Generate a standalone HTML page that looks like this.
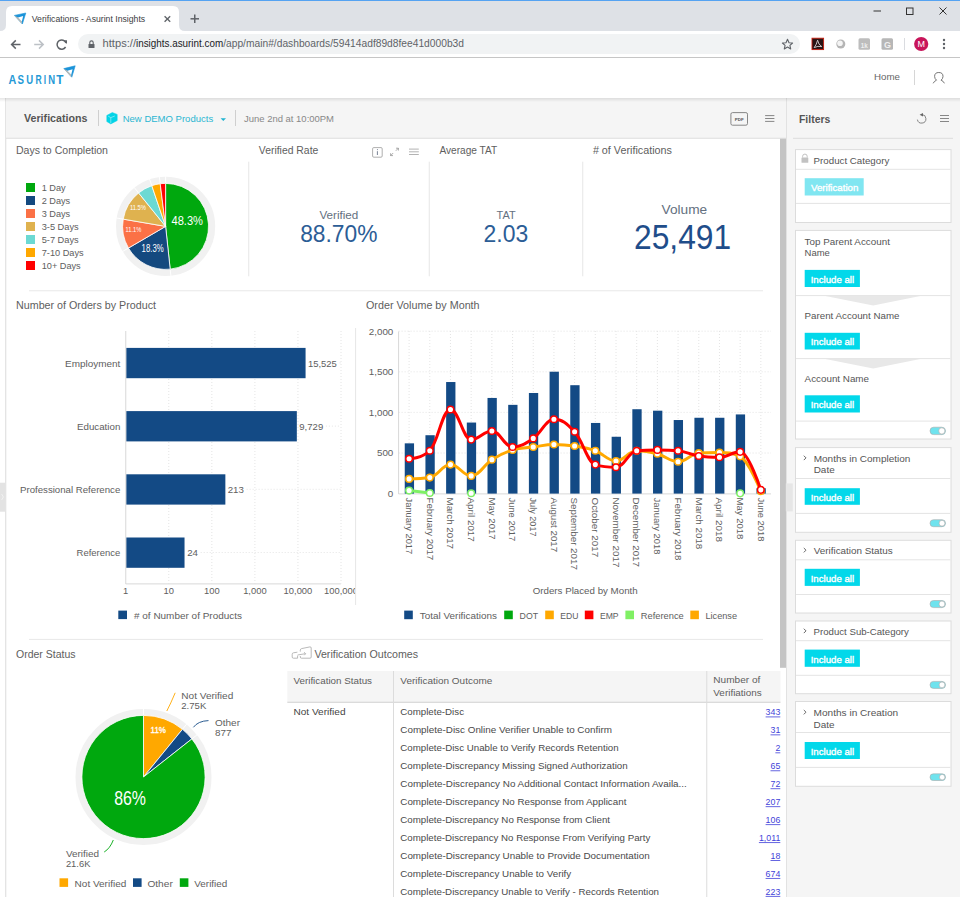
<!DOCTYPE html>
<html><head><meta charset="utf-8"><title>Verifications - Asurint Insights</title>
<style>html,body{margin:0;padding:0;background:#fff;overflow:hidden} svg{display:block} text{font-family:"Liberation Sans", sans-serif}</style>
</head><body><svg width="960" height="897" viewBox="0 0 960 897">
<rect x="0.00" y="0.00" width="960.00" height="31.00" fill="#dee1e6" />
<rect x="0.00" y="0.00" width="960.00" height="1.00" fill="#55a3f2" />
<path d="M0,31 Q6,31 6,25 L6,12 Q6,6 12,6 L173,6 Q179,6 179,12 L179,25 Q179,31 185,31 Z" fill="#fff" />
<path d="M14.4,15.4 L25.8,13 L22.4,24 Z" fill="#1b93d9" stroke="#1b93d9" stroke-width="0.6" stroke-linejoin="round"/>
<path d="M14.2,15.6 L18,17.6 L21.8,21.6 L22,23.8 Z" fill="#c7bcb0" />
<path d="M18,17.6 L23.2,16 L21.8,21.6 Z" fill="#fff" />
<text x="31.80" y="21.70" font-size="9.5" fill="#3c4043" textLength="113.40" lengthAdjust="spacingAndGlyphs">Verifications - Asurint Insights</text>
<line x1="164.60" y1="16.20" x2="170.20" y2="21.80" stroke="#5f6368" stroke-width="1.3" />
<line x1="170.20" y1="16.20" x2="164.60" y2="21.80" stroke="#5f6368" stroke-width="1.3" />
<line x1="190.50" y1="18.80" x2="199.00" y2="18.80" stroke="#5f6368" stroke-width="1.5" />
<line x1="194.75" y1="14.50" x2="194.75" y2="23.00" stroke="#5f6368" stroke-width="1.5" />
<line x1="873.50" y1="11.00" x2="881.00" y2="11.00" stroke="#333" stroke-width="1" />
<rect x="906.50" y="8.00" width="6.50" height="6.50" fill="none" stroke="#333" stroke-width="1"/>
<line x1="939.50" y1="7.50" x2="946.50" y2="14.50" stroke="#333" stroke-width="1" />
<line x1="946.50" y1="7.50" x2="939.50" y2="14.50" stroke="#333" stroke-width="1" />
<rect x="0.00" y="31.00" width="960.00" height="27.00" fill="#fff" />
<rect x="0.00" y="57.00" width="960.00" height="1.00" fill="#c6c6c6" />
<rect x="78.00" y="34.00" width="722.00" height="20.00" fill="#f1f3f4" rx="10"/>
<path d="M20.5,44.5 L11.8,44.5 M15.8,40.4 L11.6,44.5 L15.8,48.6" fill="none" stroke="#5f6368" stroke-width="1.5" />
<path d="M34.2,44.5 L43,44.5 M39,40.4 L43.2,44.5 L39,48.6" fill="none" stroke="#bdc1c6" stroke-width="1.5" />
<path d="M66,43 A4.6,4.6 0 1 0 65.6,47" fill="none" stroke="#5f6368" stroke-width="1.5" />
<path d="M63.2,40.2 L67,40.2 L67,44 Z" fill="#5f6368" />
<rect x="88.50" y="44.00" width="6.00" height="4.00" fill="#5f6368" rx="0.6"/>
<path d="M89.8,44 L89.8,42.6 A1.7,1.7 0 0 1 93.2,42.6 L93.2,44" fill="none" stroke="#5f6368" stroke-width="1.1" />
<text x="102.60" y="47.40" font-size="10.3" fill="#5f6368" textLength="33.40" lengthAdjust="spacingAndGlyphs">https://</text>
<text x="136.00" y="47.40" font-size="10.3" fill="#202124" textLength="87.10" lengthAdjust="spacingAndGlyphs">insights.asurint.com</text>
<text x="223.20" y="47.40" font-size="10.3" fill="#5f6368" textLength="240.80" lengthAdjust="spacingAndGlyphs">/app/main#/dashboards/59414adf89d8fee41d000b3d</text>
<path d="M787.5,39.3 L789,42.7 L792.6,43 L789.9,45.4 L790.7,48.9 L787.5,47.1 L784.3,48.9 L785.1,45.4 L782.4,43 L786,42.7 Z" fill="none" stroke="#5f6368" stroke-width="1.1" stroke-linejoin="round"/>
<rect x="812.00" y="38.20" width="11.60" height="11.40" fill="#2a1414" stroke="#c81e0f" stroke-width="0.9"/>
<path d="M814.2,47.6 Q816.6,44.6 817.6,40.2 Q818.4,44.8 821.8,46.6 Q817.8,45.6 814.2,47.6 Z" fill="none" stroke="#d9d2d2" stroke-width="0.9" />
<circle cx="840.8" cy="44" r="4.5" fill="#b5b5b5"/><circle cx="840" cy="43.3" r="2.8" fill="#f4f4f4"/>
<rect x="858.50" y="38.20" width="11.50" height="11.50" fill="#bdbdbd" rx="1.5"/>
<text x="860.80" y="47.80" font-size="8" fill="#f0f0f0" textLength="7.00" lengthAdjust="spacingAndGlyphs" font-weight="bold">1k</text>
<rect x="881.50" y="38.20" width="11.50" height="11.50" fill="#b7b7b7" rx="1.5"/>
<text x="884.00" y="47.80" font-size="9" fill="#f0f0f0" textLength="7.00" lengthAdjust="spacingAndGlyphs" font-weight="bold">G</text>
<line x1="904.50" y1="38.00" x2="904.50" y2="50.00" stroke="#dadce0" stroke-width="1" />
<circle cx="921.2" cy="44" r="7.1" fill="#c8155a"/>
<text x="921.20" y="47.40" font-size="9" fill="#fff" text-anchor="middle">M</text>
<circle cx="944" cy="40" r="1.2" fill="#5f6368"/>
<circle cx="944" cy="44" r="1.2" fill="#5f6368"/>
<circle cx="944" cy="48" r="1.2" fill="#5f6368"/>
<rect x="0.00" y="58.00" width="960.00" height="40.00" fill="#fff" />
<text x="8.50" y="83.90" font-size="12.2" fill="#2499d6" textLength="7.80" lengthAdjust="spacingAndGlyphs" font-weight="bold">A</text>
<text x="17.60" y="83.90" font-size="12.2" fill="#2499d6" textLength="6.50" lengthAdjust="spacingAndGlyphs" font-weight="bold">S</text>
<text x="26.30" y="83.90" font-size="12.2" fill="#2499d6" textLength="6.90" lengthAdjust="spacingAndGlyphs" font-weight="bold">U</text>
<text x="35.40" y="83.90" font-size="12.2" fill="#2499d6" textLength="6.20" lengthAdjust="spacingAndGlyphs" font-weight="bold">R</text>
<text x="43.70" y="83.90" font-size="12.2" fill="#2499d6" textLength="2.30" lengthAdjust="spacingAndGlyphs" font-weight="bold">I</text>
<text x="48.20" y="83.90" font-size="12.2" fill="#2499d6" textLength="6.85" lengthAdjust="spacingAndGlyphs" font-weight="bold">N</text>
<text x="56.30" y="83.90" font-size="12.2" fill="#2499d6" textLength="7.20" lengthAdjust="spacingAndGlyphs" font-weight="bold">T</text>
<path d="M63.8,68.6 L75.2,65.8 L71.8,77.2 Z" fill="#1b93d9" stroke="#1b93d9" stroke-width="0.6" stroke-linejoin="round"/>
<path d="M63.6,68.8 L67.4,70.8 L71.2,74.8 L71.4,77 Z" fill="#c7bcb0" />
<path d="M67.4,70.8 L72.6,69.2 L71.2,74.8 Z" fill="#fff" />
<text x="874.00" y="79.90" font-size="9.3" fill="#666" textLength="26.00" lengthAdjust="spacingAndGlyphs">Home</text>
<line x1="914.50" y1="70.00" x2="914.50" y2="85.00" stroke="#d6d6d6" stroke-width="1" />
<path d="M933.2,83.3 Q934,81.2 936.5,80.2 Q934.6,78.6 934.6,76.4 Q934.6,72.5 938.8,72.5 Q943,72.5 943,76.4 Q943,78.6 941.1,80.2 Q943.6,81.2 944.4,83.3" fill="none" stroke="#666" stroke-width="0.9" />
<rect x="0.00" y="98.00" width="960.00" height="799.00" fill="#f5f5f5" />
<defs><linearGradient id="sh" x1="0" y1="0" x2="0" y2="1"><stop offset="0" stop-color="#000" stop-opacity="0.10"/><stop offset="1" stop-color="#000" stop-opacity="0"/></linearGradient></defs>
<rect x="6.00" y="138.50" width="774.00" height="759.00" fill="#fff" />
<rect x="0.00" y="98.00" width="5.50" height="799.00" fill="#ffffff" />
<line x1="5.75" y1="98.00" x2="5.75" y2="897.00" stroke="#dcdcdc" stroke-width="1" />
<rect x="0.00" y="482.70" width="5.30" height="29.00" fill="#e3e3e3" />
<path d="M1.6,494 L3.4,497 L1.6,500" fill="none" stroke="#f5f5f5" stroke-width="0.8" />
<rect x="6.00" y="98.00" width="780.00" height="40.00" fill="#f5f5f5" />
<line x1="6.00" y1="138.25" x2="786.00" y2="138.25" stroke="#dedede" stroke-width="1" />
<text x="24.00" y="122.20" font-size="11.4" fill="#555" textLength="63.50" lengthAdjust="spacingAndGlyphs" font-weight="bold">Verifications</text>
<line x1="98.50" y1="110.00" x2="98.50" y2="126.00" stroke="#cfcfcf" stroke-width="1" />
<path d="M106.8,115.4 L112.3,112.5 L117.2,114.4 L117.2,120.6 L110.8,123.9 L106.8,121.6 Z" fill="#03d3e6" stroke="#03d3e6" stroke-width="0.5" stroke-linejoin="round"/>
<path d="M108.2,116.2 L110.8,117.6 L114.8,116 M110.8,117.6 L110.8,123.2" fill="none" stroke="#bff4fa" stroke-width="0.6" />
<text x="122.70" y="122.00" font-size="9.9" fill="#2ab6d2" textLength="90.50" lengthAdjust="spacingAndGlyphs">New DEMO Products</text>
<path d="M220.6,118.2 L226,118.2 L223.3,121 Z" fill="#1fb3d1" />
<line x1="235.50" y1="110.00" x2="235.50" y2="126.00" stroke="#cfcfcf" stroke-width="1" />
<text x="244.00" y="122.00" font-size="9.7" fill="#888" textLength="90.00" lengthAdjust="spacingAndGlyphs">June 2nd at 10:00PM</text>
<rect x="730.90" y="112.60" width="16.60" height="12.60" fill="none" stroke="#7a7a7a" stroke-width="0.9" rx="1.6"/>
<text x="734.80" y="120.80" font-size="4.3" fill="#555" textLength="9.00" lengthAdjust="spacingAndGlyphs" font-weight="bold">PDF</text>
<line x1="765.10" y1="115.60" x2="774.40" y2="115.60" stroke="#7a7a7a" stroke-width="0.9" />
<line x1="765.10" y1="118.50" x2="774.40" y2="118.50" stroke="#7a7a7a" stroke-width="0.9" />
<line x1="765.10" y1="121.40" x2="774.40" y2="121.40" stroke="#7a7a7a" stroke-width="0.9" />
<rect x="780.00" y="138.50" width="6.50" height="759.00" fill="#ffffff" />
<rect x="780.00" y="138.50" width="6.50" height="529.30" fill="#c4c4c4" />
<line x1="786.50" y1="98.00" x2="786.50" y2="897.00" stroke="#e2e2e2" stroke-width="1" />
<rect x="785.80" y="483.40" width="7.00" height="28.00" fill="#e6e6e6" />
<text x="799.00" y="122.50" font-size="11.4" fill="#555" textLength="31.30" lengthAdjust="spacingAndGlyphs" font-weight="bold">Filters</text>
<path d="M921.8,114.5 A4.3,4.3 0 1 1 917.4,119.6" fill="none" stroke="#777" stroke-width="0.9" />
<path d="M923,112.9 L919.6,114.7 L923,116.5 Z" fill="#666" />
<line x1="940.00" y1="115.50" x2="949.00" y2="115.50" stroke="#7a7a7a" stroke-width="0.9" />
<line x1="940.00" y1="118.50" x2="949.00" y2="118.50" stroke="#7a7a7a" stroke-width="0.9" />
<line x1="940.00" y1="121.50" x2="949.00" y2="121.50" stroke="#7a7a7a" stroke-width="0.9" />
<line x1="793.00" y1="138.30" x2="953.00" y2="138.30" stroke="#dcdcdc" stroke-width="1" />
<rect x="0.00" y="98.00" width="960.00" height="4.00" fill="url(#sh)" />
<text x="16.00" y="154.20" font-size="11" fill="#5e5e5e" textLength="92.00" lengthAdjust="spacingAndGlyphs">Days to Completion</text>
<rect x="26.00" y="183.00" width="9.00" height="9.00" fill="#00a80e" />
<text x="41.70" y="191.20" font-size="9.4" fill="#5e5e5e" textLength="24.00" lengthAdjust="spacingAndGlyphs">1 Day</text>
<rect x="26.00" y="196.00" width="9.00" height="9.00" fill="#14497f" />
<text x="41.70" y="204.20" font-size="9.4" fill="#5e5e5e" textLength="28.50" lengthAdjust="spacingAndGlyphs">2 Days</text>
<rect x="26.00" y="209.00" width="9.00" height="9.00" fill="#fb7146" />
<text x="41.70" y="217.20" font-size="9.4" fill="#5e5e5e" textLength="28.50" lengthAdjust="spacingAndGlyphs">3 Days</text>
<rect x="26.00" y="222.00" width="9.00" height="9.00" fill="#dfb24f" />
<text x="41.70" y="230.20" font-size="9.4" fill="#5e5e5e" textLength="37.00" lengthAdjust="spacingAndGlyphs">3-5 Days</text>
<rect x="26.00" y="235.00" width="9.00" height="9.00" fill="#6cd9d3" />
<text x="41.70" y="243.20" font-size="9.4" fill="#5e5e5e" textLength="37.00" lengthAdjust="spacingAndGlyphs">5-7 Days</text>
<rect x="26.00" y="248.00" width="9.00" height="9.00" fill="#ffa800" />
<text x="41.70" y="256.20" font-size="9.4" fill="#5e5e5e" textLength="42.00" lengthAdjust="spacingAndGlyphs">7-10 Days</text>
<rect x="26.00" y="261.00" width="9.00" height="9.00" fill="#ff0000" />
<text x="41.70" y="269.20" font-size="9.4" fill="#5e5e5e" textLength="39.00" lengthAdjust="spacingAndGlyphs">10+ Days</text>
<circle cx="165.6" cy="226.4" r="46.10" fill="none" stroke="#f1f1f1" stroke-width="7.00"/>
<line x1="165.60" y1="183.80" x2="165.60" y2="176.30" stroke="#fff" stroke-width="1.0" />
<line x1="170.14" y1="268.76" x2="170.94" y2="276.21" stroke="#fff" stroke-width="1.0" />
<line x1="128.80" y1="247.85" x2="122.32" y2="251.63" stroke="#fff" stroke-width="1.0" />
<line x1="123.61" y1="219.21" x2="116.22" y2="217.94" stroke="#fff" stroke-width="1.0" />
<line x1="138.86" y1="193.24" x2="134.15" y2="187.40" stroke="#fff" stroke-width="1.0" />
<line x1="151.93" y1="186.05" x2="149.52" y2="178.95" stroke="#fff" stroke-width="1.0" />
<line x1="160.26" y1="184.14" x2="159.32" y2="176.70" stroke="#fff" stroke-width="1.0" />
<path d="M165.60,226.40 L165.60,183.40 A43,43 0 0 1 170.18,269.15 Z" fill="#00a80e" stroke="#fff" stroke-width="0.8" stroke-linejoin="round"/>
<path d="M165.60,226.40 L170.18,269.15 A43,43 0 0 1 128.45,248.06 Z" fill="#14497f" stroke="#fff" stroke-width="0.8" stroke-linejoin="round"/>
<path d="M165.60,226.40 L128.45,248.06 A43,43 0 0 1 123.22,219.14 Z" fill="#fb7146" stroke="#fff" stroke-width="0.8" stroke-linejoin="round"/>
<path d="M165.60,226.40 L123.22,219.14 A43,43 0 0 1 138.61,192.93 Z" fill="#dfb24f" stroke="#fff" stroke-width="0.8" stroke-linejoin="round"/>
<path d="M165.60,226.40 L138.61,192.93 A43,43 0 0 1 151.80,185.67 Z" fill="#6cd9d3" stroke="#fff" stroke-width="0.8" stroke-linejoin="round"/>
<path d="M165.60,226.40 L151.80,185.67 A43,43 0 0 1 160.21,183.74 Z" fill="#ffa800" stroke="#fff" stroke-width="0.8" stroke-linejoin="round"/>
<path d="M165.60,226.40 L160.21,183.74 A43,43 0 0 1 165.60,183.40 Z" fill="#ff0000" stroke="#fff" stroke-width="0.8" stroke-linejoin="round"/>
<text x="171.50" y="224.60" font-size="13.5" fill="#fff" textLength="31.50" lengthAdjust="spacingAndGlyphs">48.3%</text>
<text x="141.60" y="251.90" font-size="10" fill="#fff" textLength="22.00" lengthAdjust="spacingAndGlyphs">18.3%</text>
<text x="125.50" y="232.20" font-size="7.4" fill="#fff" textLength="15.80" lengthAdjust="spacingAndGlyphs">11.1%</text>
<text x="129.90" y="209.60" font-size="7.4" fill="#fff" textLength="16.00" lengthAdjust="spacingAndGlyphs">11.5%</text>
<text x="258.80" y="154.20" font-size="11" fill="#5e5e5e" textLength="59.50" lengthAdjust="spacingAndGlyphs">Verified Rate</text>
<rect x="372.60" y="147.60" width="9.60" height="9.60" fill="none" stroke="#9a9a9a" stroke-width="0.8" rx="1.2"/>
<line x1="377.40" y1="151.20" x2="377.40" y2="155.00" stroke="#6a7488" stroke-width="0.9" />
<rect x="376.95" y="149.20" width="0.90" height="0.90" fill="#6a7488" />
<path d="M390.6,155.6 L393.2,153 M390.6,153.2 L390.6,155.6 L393,155.6 M398.4,148.2 L395.8,150.8 M396,148.2 L398.4,148.2 L398.4,150.6" fill="none" stroke="#8a8a8a" stroke-width="0.7" />
<line x1="409.00" y1="149.10" x2="418.80" y2="149.10" stroke="#a0a0a0" stroke-width="0.8" />
<line x1="409.00" y1="151.80" x2="418.80" y2="151.80" stroke="#a0a0a0" stroke-width="0.8" />
<line x1="409.00" y1="154.50" x2="418.80" y2="154.50" stroke="#a0a0a0" stroke-width="0.8" />
<line x1="248.75" y1="161.70" x2="248.75" y2="276.30" stroke="#e6e6e6" stroke-width="1" />
<line x1="429.25" y1="161.70" x2="429.25" y2="276.30" stroke="#e6e6e6" stroke-width="1" />
<line x1="582.75" y1="161.70" x2="582.75" y2="276.30" stroke="#e6e6e6" stroke-width="1" />
<text x="319.50" y="219.40" font-size="10.8" fill="#647080" textLength="38.80" lengthAdjust="spacingAndGlyphs">Verified</text>
<text x="300.20" y="241.70" font-size="23.6" fill="#2c5d96" textLength="77.20" lengthAdjust="spacingAndGlyphs">88.70%</text>
<text x="439.40" y="154.20" font-size="11" fill="#5e5e5e" textLength="57.80" lengthAdjust="spacingAndGlyphs">Average TAT</text>
<text x="496.60" y="219.40" font-size="10.8" fill="#647080" textLength="19.00" lengthAdjust="spacingAndGlyphs">TAT</text>
<text x="483.60" y="241.70" font-size="23.6" fill="#2c5d96" textLength="44.60" lengthAdjust="spacingAndGlyphs">2.03</text>
<text x="592.90" y="154.20" font-size="11" fill="#5e5e5e" textLength="79.00" lengthAdjust="spacingAndGlyphs"># of Verifications</text>
<text x="661.60" y="214.20" font-size="13.5" fill="#647080" textLength="45.60" lengthAdjust="spacingAndGlyphs">Volume</text>
<text x="634.00" y="249.20" font-size="34.5" fill="#1f4d8a" textLength="97.20" lengthAdjust="spacingAndGlyphs">25,491</text>
<line x1="29.00" y1="290.75" x2="763.00" y2="290.75" stroke="#e8e8e8" stroke-width="1" />
<text x="16.00" y="309.10" font-size="11" fill="#5e5e5e" textLength="140.00" lengthAdjust="spacingAndGlyphs">Number of Orders by Product</text>
<line x1="168.76" y1="331.00" x2="168.76" y2="583.50" stroke="#dddddd" stroke-width="0.8" stroke-dasharray="1,2"/>
<line x1="211.82" y1="331.00" x2="211.82" y2="583.50" stroke="#dddddd" stroke-width="0.8" stroke-dasharray="1,2"/>
<line x1="254.88" y1="331.00" x2="254.88" y2="583.50" stroke="#dddddd" stroke-width="0.8" stroke-dasharray="1,2"/>
<line x1="297.94" y1="331.00" x2="297.94" y2="583.50" stroke="#dddddd" stroke-width="0.8" stroke-dasharray="1,2"/>
<line x1="341.00" y1="331.00" x2="341.00" y2="583.50" stroke="#dddddd" stroke-width="0.8" stroke-dasharray="1,2"/>
<line x1="339.60" y1="362.90" x2="340.80" y2="362.90" stroke="#dddddd" stroke-width="0.8" stroke-dasharray="1,2"/>
<rect x="126.20" y="347.90" width="179.37" height="30.30" fill="#134a85" />
<text x="307.90" y="366.60" font-size="9.4" fill="#5e5e5e" textLength="29.00" lengthAdjust="spacingAndGlyphs">15,525</text>
<text x="65.00" y="366.80" font-size="9.4" fill="#5e5e5e" textLength="55.30" lengthAdjust="spacingAndGlyphs">Employment</text>
<line x1="325.90" y1="426.10" x2="340.80" y2="426.10" stroke="#dddddd" stroke-width="0.8" stroke-dasharray="1,2"/>
<rect x="126.20" y="411.10" width="170.63" height="30.30" fill="#134a85" />
<text x="299.30" y="429.80" font-size="9.4" fill="#5e5e5e" textLength="23.90" lengthAdjust="spacingAndGlyphs">9,729</text>
<text x="77.00" y="430.00" font-size="9.4" fill="#5e5e5e" textLength="43.30" lengthAdjust="spacingAndGlyphs">Education</text>
<line x1="246.60" y1="489.30" x2="340.80" y2="489.30" stroke="#dddddd" stroke-width="0.8" stroke-dasharray="1,2"/>
<rect x="126.20" y="474.30" width="99.16" height="30.30" fill="#134a85" />
<text x="227.70" y="493.00" font-size="9.4" fill="#5e5e5e" textLength="16.20" lengthAdjust="spacingAndGlyphs">213</text>
<text x="20.00" y="493.20" font-size="9.4" fill="#5e5e5e" textLength="100.30" lengthAdjust="spacingAndGlyphs">Professional Reference</text>
<line x1="200.70" y1="552.50" x2="340.80" y2="552.50" stroke="#dddddd" stroke-width="0.8" stroke-dasharray="1,2"/>
<rect x="126.20" y="537.50" width="58.33" height="30.30" fill="#134a85" />
<text x="187.20" y="556.20" font-size="9.4" fill="#5e5e5e" textLength="10.80" lengthAdjust="spacingAndGlyphs">24</text>
<text x="76.60" y="556.40" font-size="9.4" fill="#5e5e5e" textLength="43.70" lengthAdjust="spacingAndGlyphs">Reference</text>
<line x1="125.75" y1="331.00" x2="125.75" y2="584.00" stroke="#d8d8d8" stroke-width="1" />
<line x1="125.70" y1="583.90" x2="340.80" y2="583.90" stroke="#d8d8d8" stroke-width="1" />
<text x="125.70" y="594.20" font-size="9.4" fill="#5e5e5e" text-anchor="middle">1</text>
<text x="168.76" y="594.20" font-size="9.4" fill="#5e5e5e" text-anchor="middle">10</text>
<text x="211.82" y="594.20" font-size="9.4" fill="#5e5e5e" text-anchor="middle">100</text>
<text x="254.88" y="594.20" font-size="9.4" fill="#5e5e5e" text-anchor="middle">1,000</text>
<text x="297.94" y="594.20" font-size="9.4" fill="#5e5e5e" text-anchor="middle">10,000</text>
<clipPath id="bc"><rect x="300" y="580" width="55.4" height="20"/></clipPath>
<text x="341.00" y="594.20" font-size="9.4" fill="#5e5e5e" text-anchor="middle" clip-path="url(#bc)">100,000</text>
<line x1="355.60" y1="328.00" x2="355.60" y2="605.00" stroke="#e6e6e6" stroke-width="1" />
<rect x="118.30" y="610.60" width="8.70" height="8.50" fill="#134a85" />
<text x="134.00" y="618.50" font-size="9.4" fill="#5e5e5e" textLength="108.00" lengthAdjust="spacingAndGlyphs"># of Number of Products</text>
<text x="366.00" y="309.10" font-size="11" fill="#5e5e5e" textLength="113.60" lengthAdjust="spacingAndGlyphs">Order Volume by Month</text>
<text x="393.30" y="497.00" font-size="9.8" fill="#5e5e5e" text-anchor="end">0</text>
<line x1="398.60" y1="453.00" x2="771.00" y2="453.00" stroke="#dddddd" stroke-width="0.8" stroke-dasharray="1,2"/>
<text x="393.30" y="456.40" font-size="9.8" fill="#5e5e5e" text-anchor="end">500</text>
<line x1="398.60" y1="412.40" x2="771.00" y2="412.40" stroke="#dddddd" stroke-width="0.8" stroke-dasharray="1,2"/>
<text x="393.30" y="415.80" font-size="9.8" fill="#5e5e5e" text-anchor="end">1,000</text>
<line x1="398.60" y1="371.80" x2="771.00" y2="371.80" stroke="#dddddd" stroke-width="0.8" stroke-dasharray="1,2"/>
<text x="393.30" y="375.20" font-size="9.8" fill="#5e5e5e" text-anchor="end">1,500</text>
<line x1="398.60" y1="331.20" x2="771.00" y2="331.20" stroke="#dddddd" stroke-width="0.8" stroke-dasharray="1,2"/>
<text x="393.30" y="334.60" font-size="9.8" fill="#5e5e5e" text-anchor="end">2,000</text>
<line x1="409.10" y1="331.00" x2="409.10" y2="493.60" stroke="#dddddd" stroke-width="0.8" stroke-dasharray="1,2"/>
<line x1="429.79" y1="331.00" x2="429.79" y2="493.60" stroke="#dddddd" stroke-width="0.8" stroke-dasharray="1,2"/>
<line x1="450.48" y1="331.00" x2="450.48" y2="493.60" stroke="#dddddd" stroke-width="0.8" stroke-dasharray="1,2"/>
<line x1="471.17" y1="331.00" x2="471.17" y2="493.60" stroke="#dddddd" stroke-width="0.8" stroke-dasharray="1,2"/>
<line x1="491.86" y1="331.00" x2="491.86" y2="493.60" stroke="#dddddd" stroke-width="0.8" stroke-dasharray="1,2"/>
<line x1="512.55" y1="331.00" x2="512.55" y2="493.60" stroke="#dddddd" stroke-width="0.8" stroke-dasharray="1,2"/>
<line x1="533.24" y1="331.00" x2="533.24" y2="493.60" stroke="#dddddd" stroke-width="0.8" stroke-dasharray="1,2"/>
<line x1="553.93" y1="331.00" x2="553.93" y2="493.60" stroke="#dddddd" stroke-width="0.8" stroke-dasharray="1,2"/>
<line x1="574.62" y1="331.00" x2="574.62" y2="493.60" stroke="#dddddd" stroke-width="0.8" stroke-dasharray="1,2"/>
<line x1="595.31" y1="331.00" x2="595.31" y2="493.60" stroke="#dddddd" stroke-width="0.8" stroke-dasharray="1,2"/>
<line x1="616.00" y1="331.00" x2="616.00" y2="493.60" stroke="#dddddd" stroke-width="0.8" stroke-dasharray="1,2"/>
<line x1="636.69" y1="331.00" x2="636.69" y2="493.60" stroke="#dddddd" stroke-width="0.8" stroke-dasharray="1,2"/>
<line x1="657.38" y1="331.00" x2="657.38" y2="493.60" stroke="#dddddd" stroke-width="0.8" stroke-dasharray="1,2"/>
<line x1="678.07" y1="331.00" x2="678.07" y2="493.60" stroke="#dddddd" stroke-width="0.8" stroke-dasharray="1,2"/>
<line x1="698.76" y1="331.00" x2="698.76" y2="493.60" stroke="#dddddd" stroke-width="0.8" stroke-dasharray="1,2"/>
<line x1="719.45" y1="331.00" x2="719.45" y2="493.60" stroke="#dddddd" stroke-width="0.8" stroke-dasharray="1,2"/>
<line x1="740.14" y1="331.00" x2="740.14" y2="493.60" stroke="#dddddd" stroke-width="0.8" stroke-dasharray="1,2"/>
<line x1="760.83" y1="331.00" x2="760.83" y2="493.60" stroke="#dddddd" stroke-width="0.8" stroke-dasharray="1,2"/>
<line x1="398.60" y1="331.50" x2="398.60" y2="494.00" stroke="#d8d8d8" stroke-width="1" />
<line x1="398.60" y1="493.90" x2="771.00" y2="493.90" stroke="#d8d8d8" stroke-width="1" />
<rect x="404.75" y="443.34" width="9.30" height="50.26" fill="#134a85" />
<rect x="425.44" y="435.22" width="9.30" height="58.38" fill="#134a85" />
<rect x="446.13" y="382.03" width="9.30" height="111.57" fill="#134a85" />
<rect x="466.82" y="422.55" width="9.30" height="71.05" fill="#134a85" />
<rect x="487.51" y="397.95" width="9.30" height="95.65" fill="#134a85" />
<rect x="508.20" y="404.85" width="9.30" height="88.75" fill="#134a85" />
<rect x="528.89" y="392.99" width="9.30" height="100.61" fill="#134a85" />
<rect x="549.58" y="371.72" width="9.30" height="121.88" fill="#134a85" />
<rect x="570.27" y="385.20" width="9.30" height="108.40" fill="#134a85" />
<rect x="590.96" y="422.96" width="9.30" height="70.64" fill="#134a85" />
<rect x="611.65" y="436.76" width="9.30" height="56.84" fill="#134a85" />
<rect x="632.34" y="409.23" width="9.30" height="84.37" fill="#134a85" />
<rect x="653.03" y="410.69" width="9.30" height="82.91" fill="#134a85" />
<rect x="673.72" y="420.03" width="9.30" height="73.57" fill="#134a85" />
<rect x="694.41" y="417.76" width="9.30" height="75.84" fill="#134a85" />
<rect x="715.10" y="417.76" width="9.30" height="75.84" fill="#134a85" />
<rect x="735.79" y="414.43" width="9.30" height="79.17" fill="#134a85" />
<rect x="756.48" y="488.24" width="9.30" height="5.36" fill="#134a85" />
<path d="M409.10,478.90 C409.10,478.90 421.51,478.90 429.79,477.60 C438.07,476.30 442.20,464.61 450.48,464.61 C458.76,464.61 462.89,475.90 471.17,475.90 C479.45,475.90 483.58,464.86 491.86,459.66 C500.14,454.46 504.27,452.45 512.55,449.91 C520.83,447.38 524.96,448.08 533.24,446.99 C541.52,445.90 545.65,444.47 553.93,444.47 C562.21,444.47 566.34,444.77 574.62,446.02 C582.90,447.27 587.03,447.72 595.31,450.73 C603.59,453.73 607.72,461.04 616.00,461.04 C624.28,461.04 628.41,450.73 636.69,450.73 C644.97,450.73 649.10,451.62 657.38,453.81 C665.66,456.00 669.79,461.69 678.07,461.69 C686.35,461.69 690.48,453.73 698.76,453.08 C707.04,452.43 711.17,452.43 719.45,452.43 C727.73,452.43 731.86,452.43 740.14,456.33 C748.42,460.23 760.83,491.16 760.83,491.16" fill="none" stroke="#ffa800" stroke-width="3" stroke-linejoin="round" stroke-linecap="round"/>
<circle cx="409.10" cy="478.90" r="3.3" fill="#fff" stroke="#ffa800" stroke-width="1.5"/>
<circle cx="429.79" cy="477.60" r="3.3" fill="#fff" stroke="#ffa800" stroke-width="1.5"/>
<circle cx="450.48" cy="464.61" r="3.3" fill="#fff" stroke="#ffa800" stroke-width="1.5"/>
<circle cx="471.17" cy="475.90" r="3.3" fill="#fff" stroke="#ffa800" stroke-width="1.5"/>
<circle cx="491.86" cy="459.66" r="3.3" fill="#fff" stroke="#ffa800" stroke-width="1.5"/>
<circle cx="512.55" cy="449.91" r="3.3" fill="#fff" stroke="#ffa800" stroke-width="1.5"/>
<circle cx="533.24" cy="446.99" r="3.3" fill="#fff" stroke="#ffa800" stroke-width="1.5"/>
<circle cx="553.93" cy="444.47" r="3.3" fill="#fff" stroke="#ffa800" stroke-width="1.5"/>
<circle cx="574.62" cy="446.02" r="3.3" fill="#fff" stroke="#ffa800" stroke-width="1.5"/>
<circle cx="595.31" cy="450.73" r="3.3" fill="#fff" stroke="#ffa800" stroke-width="1.5"/>
<circle cx="616.00" cy="461.04" r="3.3" fill="#fff" stroke="#ffa800" stroke-width="1.5"/>
<circle cx="636.69" cy="450.73" r="3.3" fill="#fff" stroke="#ffa800" stroke-width="1.5"/>
<circle cx="657.38" cy="453.81" r="3.3" fill="#fff" stroke="#ffa800" stroke-width="1.5"/>
<circle cx="678.07" cy="461.69" r="3.3" fill="#fff" stroke="#ffa800" stroke-width="1.5"/>
<circle cx="698.76" cy="453.08" r="3.3" fill="#fff" stroke="#ffa800" stroke-width="1.5"/>
<circle cx="719.45" cy="452.43" r="3.3" fill="#fff" stroke="#ffa800" stroke-width="1.5"/>
<circle cx="740.14" cy="456.33" r="3.3" fill="#fff" stroke="#ffa800" stroke-width="1.5"/>
<circle cx="760.83" cy="491.16" r="3.3" fill="#fff" stroke="#ffa800" stroke-width="1.5"/>
<path d="M409.10,458.77 C409.10,458.77 421.51,458.77 429.79,450.73 C438.07,442.69 442.20,409.48 450.48,409.48 C458.76,409.48 462.89,439.60 471.17,439.60 C479.45,439.60 483.58,430.99 491.86,430.99 C500.14,430.99 504.27,446.99 512.55,446.99 C520.83,446.99 524.96,443.92 533.24,438.38 C541.52,432.85 545.65,419.30 553.93,419.30 C562.21,419.30 566.34,422.74 574.62,431.81 C582.90,440.87 587.03,461.93 595.31,464.61 C603.59,467.29 607.72,467.29 616.00,467.29 C624.28,467.29 628.41,451.54 636.69,450.73 C644.97,449.91 649.10,449.91 657.38,449.91 C665.66,449.91 669.79,449.91 678.07,450.73 C686.35,451.54 690.48,454.71 698.76,456.00 C707.04,457.30 711.17,457.30 719.45,457.30 C727.73,457.30 731.86,451.86 740.14,451.86 C748.42,451.86 760.83,489.86 760.83,489.86" fill="none" stroke="#ff0000" stroke-width="3" stroke-linejoin="round" stroke-linecap="round"/>
<circle cx="409.10" cy="458.77" r="3.3" fill="#fff" stroke="#ff0000" stroke-width="1.5"/>
<circle cx="429.79" cy="450.73" r="3.3" fill="#fff" stroke="#ff0000" stroke-width="1.5"/>
<circle cx="450.48" cy="409.48" r="3.3" fill="#fff" stroke="#ff0000" stroke-width="1.5"/>
<circle cx="471.17" cy="439.60" r="3.3" fill="#fff" stroke="#ff0000" stroke-width="1.5"/>
<circle cx="491.86" cy="430.99" r="3.3" fill="#fff" stroke="#ff0000" stroke-width="1.5"/>
<circle cx="512.55" cy="446.99" r="3.3" fill="#fff" stroke="#ff0000" stroke-width="1.5"/>
<circle cx="533.24" cy="438.38" r="3.3" fill="#fff" stroke="#ff0000" stroke-width="1.5"/>
<circle cx="553.93" cy="419.30" r="3.3" fill="#fff" stroke="#ff0000" stroke-width="1.5"/>
<circle cx="574.62" cy="431.81" r="3.3" fill="#fff" stroke="#ff0000" stroke-width="1.5"/>
<circle cx="595.31" cy="464.61" r="3.3" fill="#fff" stroke="#ff0000" stroke-width="1.5"/>
<circle cx="616.00" cy="467.29" r="3.3" fill="#fff" stroke="#ff0000" stroke-width="1.5"/>
<circle cx="636.69" cy="450.73" r="3.3" fill="#fff" stroke="#ff0000" stroke-width="1.5"/>
<circle cx="657.38" cy="449.91" r="3.3" fill="#fff" stroke="#ff0000" stroke-width="1.5"/>
<circle cx="678.07" cy="450.73" r="3.3" fill="#fff" stroke="#ff0000" stroke-width="1.5"/>
<circle cx="698.76" cy="456.00" r="3.3" fill="#fff" stroke="#ff0000" stroke-width="1.5"/>
<circle cx="719.45" cy="457.30" r="3.3" fill="#fff" stroke="#ff0000" stroke-width="1.5"/>
<circle cx="740.14" cy="451.86" r="3.3" fill="#fff" stroke="#ff0000" stroke-width="1.5"/>
<circle cx="760.83" cy="489.86" r="3.3" fill="#fff" stroke="#ff0000" stroke-width="1.5"/>
<line x1="409.10" y1="490.60" x2="429.79" y2="492.95" stroke="#7ef064" stroke-width="3" />
<circle cx="409.10" cy="490.60" r="3.3" fill="#fff" stroke="#7ef064" stroke-width="1.5"/>
<circle cx="429.79" cy="492.95" r="3.3" fill="#fff" stroke="#7ef064" stroke-width="1.5"/>
<circle cx="471.17" cy="493.19" r="3.3" fill="#fff" stroke="#7ef064" stroke-width="1.5"/>
<circle cx="740.14" cy="493.36" r="3.3" fill="#fff" stroke="#7ef064" stroke-width="1.5"/>
<text x="0" y="0" font-size="9.4" fill="#5e5e5e" textLength="56.80" lengthAdjust="spacingAndGlyphs" transform="translate(405.90,497.5) rotate(90)">January 2017</text>
<text x="0" y="0" font-size="9.4" fill="#5e5e5e" textLength="62.60" lengthAdjust="spacingAndGlyphs" transform="translate(426.59,497.5) rotate(90)">February 2017</text>
<text x="0" y="0" font-size="9.4" fill="#5e5e5e" textLength="51.55" lengthAdjust="spacingAndGlyphs" transform="translate(447.28,497.5) rotate(90)">March 2017</text>
<text x="0" y="0" font-size="9.4" fill="#5e5e5e" textLength="44.30" lengthAdjust="spacingAndGlyphs" transform="translate(467.97,497.5) rotate(90)">April 2017</text>
<text x="0" y="0" font-size="9.4" fill="#5e5e5e" textLength="42.20" lengthAdjust="spacingAndGlyphs" transform="translate(488.66,497.5) rotate(90)">May 2017</text>
<text x="0" y="0" font-size="9.4" fill="#5e5e5e" textLength="43.80" lengthAdjust="spacingAndGlyphs" transform="translate(509.35,497.5) rotate(90)">June 2017</text>
<text x="0" y="0" font-size="9.4" fill="#5e5e5e" textLength="39.05" lengthAdjust="spacingAndGlyphs" transform="translate(530.04,497.5) rotate(90)">July 2017</text>
<text x="0" y="0" font-size="9.4" fill="#5e5e5e" textLength="54.70" lengthAdjust="spacingAndGlyphs" transform="translate(550.73,497.5) rotate(90)">August 2017</text>
<text x="0" y="0" font-size="9.4" fill="#5e5e5e" textLength="72.40" lengthAdjust="spacingAndGlyphs" transform="translate(571.42,497.5) rotate(90)">September 2017</text>
<text x="0" y="0" font-size="9.4" fill="#5e5e5e" textLength="59.60" lengthAdjust="spacingAndGlyphs" transform="translate(592.11,497.5) rotate(90)">October 2017</text>
<text x="0" y="0" font-size="9.4" fill="#5e5e5e" textLength="70.00" lengthAdjust="spacingAndGlyphs" transform="translate(612.80,497.5) rotate(90)">November 2017</text>
<text x="0" y="0" font-size="9.4" fill="#5e5e5e" textLength="69.50" lengthAdjust="spacingAndGlyphs" transform="translate(633.49,497.5) rotate(90)">December 2017</text>
<text x="0" y="0" font-size="9.4" fill="#5e5e5e" textLength="57.00" lengthAdjust="spacingAndGlyphs" transform="translate(654.18,497.5) rotate(90)">January 2018</text>
<text x="0" y="0" font-size="9.4" fill="#5e5e5e" textLength="63.00" lengthAdjust="spacingAndGlyphs" transform="translate(674.87,497.5) rotate(90)">February 2018</text>
<text x="0" y="0" font-size="9.4" fill="#5e5e5e" textLength="51.80" lengthAdjust="spacingAndGlyphs" transform="translate(695.56,497.5) rotate(90)">March 2018</text>
<text x="0" y="0" font-size="9.4" fill="#5e5e5e" textLength="44.50" lengthAdjust="spacingAndGlyphs" transform="translate(716.25,497.5) rotate(90)">April 2018</text>
<text x="0" y="0" font-size="9.4" fill="#5e5e5e" textLength="41.90" lengthAdjust="spacingAndGlyphs" transform="translate(736.94,497.5) rotate(90)">May 2018</text>
<text x="0" y="0" font-size="9.4" fill="#5e5e5e" textLength="44.00" lengthAdjust="spacingAndGlyphs" transform="translate(757.63,497.5) rotate(90)">June 2018</text>
<text x="532.70" y="594.00" font-size="9.4" fill="#5e5e5e" textLength="105.00" lengthAdjust="spacingAndGlyphs">Orders Placed by Month</text>
<rect x="404.20" y="610.60" width="8.60" height="8.60" fill="#134a85" />
<text x="419.80" y="618.50" font-size="9.4" fill="#5e5e5e" textLength="77.20" lengthAdjust="spacingAndGlyphs">Total Verifications</text>
<rect x="504.20" y="610.60" width="8.60" height="8.60" fill="#00a80e" />
<text x="519.60" y="618.50" font-size="9.4" fill="#5e5e5e" textLength="18.50" lengthAdjust="spacingAndGlyphs">DOT</text>
<rect x="545.20" y="610.60" width="8.60" height="8.60" fill="#ffa800" />
<text x="560.30" y="618.50" font-size="9.4" fill="#5e5e5e" textLength="18.20" lengthAdjust="spacingAndGlyphs">EDU</text>
<rect x="584.80" y="610.60" width="8.60" height="8.60" fill="#ff0000" />
<text x="599.90" y="618.50" font-size="9.4" fill="#5e5e5e" textLength="18.70" lengthAdjust="spacingAndGlyphs">EMP</text>
<rect x="625.40" y="610.60" width="8.60" height="8.60" fill="#80f064" />
<text x="640.80" y="618.50" font-size="9.4" fill="#5e5e5e" textLength="43.00" lengthAdjust="spacingAndGlyphs">Reference</text>
<rect x="690.30" y="610.60" width="8.60" height="8.60" fill="#ffa800" />
<text x="705.40" y="618.50" font-size="9.4" fill="#5e5e5e" textLength="31.70" lengthAdjust="spacingAndGlyphs">License</text>
<line x1="29.00" y1="639.40" x2="763.00" y2="639.40" stroke="#e8e8e8" stroke-width="1" />
<text x="16.00" y="657.60" font-size="11" fill="#5e5e5e" textLength="59.50" lengthAdjust="spacingAndGlyphs">Order Status</text>
<circle cx="143.5" cy="777" r="64.65" fill="none" stroke="#f1f1f1" stroke-width="6.70"/>
<line x1="143.50" y1="715.70" x2="143.50" y2="708.50" stroke="#fff" stroke-width="1.0" />
<line x1="182.28" y1="729.52" x2="186.83" y2="723.95" stroke="#fff" stroke-width="1.0" />
<line x1="191.65" y1="739.06" x2="197.31" y2="734.61" stroke="#fff" stroke-width="1.0" />
<path d="M143.50,777.00 L143.50,715.40 A61.6,61.6 0 0 1 182.47,729.29 Z" fill="#ffa800" stroke="#fff" stroke-width="0.8" stroke-linejoin="round"/>
<path d="M143.50,777.00 L182.47,729.29 A61.6,61.6 0 0 1 191.89,738.88 Z" fill="#134a85" stroke="#fff" stroke-width="0.8" stroke-linejoin="round"/>
<path d="M143.50,777.00 L191.89,738.88 A61.6,61.6 0 1 1 143.50,715.40 Z" fill="#00a80e" stroke="#fff" stroke-width="0.8" stroke-linejoin="round"/>
<text x="114.20" y="804.60" font-size="20" fill="#fff" textLength="31.80" lengthAdjust="spacingAndGlyphs">86%</text>
<text x="150.50" y="732.70" font-size="8.6" fill="#fff" textLength="15.50" lengthAdjust="spacingAndGlyphs" stroke="#fff" stroke-width="0.3">11%</text>
<path d="M166.8,711 Q170.5,704 175.2,692.8" fill="none" stroke="#ffa800" stroke-width="0.9" />
<path d="M193.4,727.3 Q198,721 208.5,720.6" fill="none" stroke="#134a85" stroke-width="0.9" />
<path d="M113.3,840 Q110,848.5 104.2,852" fill="none" stroke="#00a80e" stroke-width="0.9" />
<text x="181.30" y="699.00" font-size="9.4" fill="#5e5e5e" textLength="52.00" lengthAdjust="spacingAndGlyphs">Not Verified</text>
<text x="181.30" y="709.30" font-size="9.4" fill="#5e5e5e" textLength="25.00" lengthAdjust="spacingAndGlyphs">2.75K</text>
<text x="215.00" y="726.00" font-size="9.4" fill="#5e5e5e" textLength="25.00" lengthAdjust="spacingAndGlyphs">Other</text>
<text x="215.00" y="736.30" font-size="9.4" fill="#5e5e5e" textLength="16.50" lengthAdjust="spacingAndGlyphs">877</text>
<text x="65.90" y="856.60" font-size="9.4" fill="#5e5e5e" textLength="33.20" lengthAdjust="spacingAndGlyphs">Verified</text>
<text x="65.90" y="866.70" font-size="9.4" fill="#5e5e5e" textLength="24.50" lengthAdjust="spacingAndGlyphs">21.6K</text>
<rect x="59.50" y="878.30" width="8.60" height="8.60" fill="#ffa800" />
<text x="74.60" y="886.50" font-size="9.4" fill="#5e5e5e" textLength="51.70" lengthAdjust="spacingAndGlyphs">Not Verified</text>
<rect x="133.00" y="878.30" width="8.60" height="8.60" fill="#134a85" />
<text x="147.40" y="886.50" font-size="9.4" fill="#5e5e5e" textLength="25.40" lengthAdjust="spacingAndGlyphs">Other</text>
<rect x="179.80" y="878.30" width="8.60" height="8.60" fill="#00a80e" />
<text x="194.30" y="886.50" font-size="9.4" fill="#5e5e5e" textLength="33.00" lengthAdjust="spacingAndGlyphs">Verified</text>
<path d="M297.6,655.6 L297.6,658.2 L293.4,658.2 Q292.2,658.2 292.2,657 L292.2,654.2 Q292.2,653 293.4,652.8 L297.4,652.2 M300.3,656 L300.3,657 Q300.3,658.2 301.5,658.2 L310,658.2 Q311.2,658.2 311.2,657 L311.2,648 Q311.2,646.7 309.9,646.9 L301.6,648.6 Q300.3,648.9 300.3,650.2 L300.3,651.6 M297.6,655 L305.4,653.7 M304.2,652.2 L305.6,653.7 L304.4,655.2" fill="none" stroke="#a8a8a8" stroke-width="0.8" stroke-linejoin="round"/>
<text x="314.40" y="657.50" font-size="11" fill="#5e5e5e" textLength="103.70" lengthAdjust="spacingAndGlyphs">Verification Outcomes</text>
<rect x="287.30" y="671.00" width="493.20" height="31.00" fill="#f5f5f5" />
<line x1="287.30" y1="702.25" x2="780.50" y2="702.25" stroke="#d0d0d0" stroke-width="1" />
<line x1="393.50" y1="671.00" x2="393.50" y2="897.00" stroke="#dcdcdc" stroke-width="1" />
<line x1="706.75" y1="671.00" x2="706.75" y2="897.00" stroke="#dcdcdc" stroke-width="1" />
<text x="293.50" y="684.00" font-size="9.4" fill="#5e5e5e" textLength="78.50" lengthAdjust="spacingAndGlyphs">Verification Status</text>
<text x="400.30" y="683.80" font-size="9.4" fill="#5e5e5e" textLength="92.00" lengthAdjust="spacingAndGlyphs">Verification Outcome</text>
<text x="713.30" y="683.30" font-size="9.4" fill="#5e5e5e" textLength="47.00" lengthAdjust="spacingAndGlyphs">Number of</text>
<text x="713.30" y="696.40" font-size="9.4" fill="#5e5e5e" textLength="48.50" lengthAdjust="spacingAndGlyphs">Verifiations</text>
<text x="293.50" y="715.40" font-size="9.4" fill="#444" textLength="52.00" lengthAdjust="spacingAndGlyphs">Not Verified</text>
<text x="400.30" y="715.30" font-size="9.4" fill="#4a4a4a" textLength="63.70" lengthAdjust="spacingAndGlyphs">Complete-Disc</text>
<text x="765.60" y="715.30" font-size="9.4" fill="#3f3fd9" textLength="14.70" lengthAdjust="spacingAndGlyphs">343</text>
<line x1="765.60" y1="716.90" x2="780.30" y2="716.90" stroke="#3f3fd9" stroke-width="0.8" />
<text x="400.30" y="733.25" font-size="9.4" fill="#4a4a4a" textLength="211.60" lengthAdjust="spacingAndGlyphs">Complete-Disc Online Verifier Unable to Confirm</text>
<text x="770.50" y="733.25" font-size="9.4" fill="#3f3fd9" textLength="9.80" lengthAdjust="spacingAndGlyphs">31</text>
<line x1="770.50" y1="734.85" x2="780.30" y2="734.85" stroke="#3f3fd9" stroke-width="0.8" />
<text x="400.30" y="751.20" font-size="9.4" fill="#4a4a4a" textLength="218.40" lengthAdjust="spacingAndGlyphs">Complete-Disc Unable to Verify Records Retention</text>
<text x="775.40" y="751.20" font-size="9.4" fill="#3f3fd9" textLength="4.90" lengthAdjust="spacingAndGlyphs">2</text>
<line x1="775.40" y1="752.80" x2="780.30" y2="752.80" stroke="#3f3fd9" stroke-width="0.8" />
<text x="400.30" y="769.15" font-size="9.4" fill="#4a4a4a" textLength="227.40" lengthAdjust="spacingAndGlyphs">Complete-Discrepancy Missing Signed Authorization</text>
<text x="770.50" y="769.15" font-size="9.4" fill="#3f3fd9" textLength="9.80" lengthAdjust="spacingAndGlyphs">65</text>
<line x1="770.50" y1="770.75" x2="780.30" y2="770.75" stroke="#3f3fd9" stroke-width="0.8" />
<text x="400.30" y="787.10" font-size="9.4" fill="#4a4a4a" textLength="286.50" lengthAdjust="spacingAndGlyphs">Complete-Discrepancy No Additional Contact Information Availa...</text>
<text x="770.50" y="787.10" font-size="9.4" fill="#3f3fd9" textLength="9.80" lengthAdjust="spacingAndGlyphs">72</text>
<line x1="770.50" y1="788.70" x2="780.30" y2="788.70" stroke="#3f3fd9" stroke-width="0.8" />
<text x="400.30" y="805.05" font-size="9.4" fill="#4a4a4a" textLength="226.10" lengthAdjust="spacingAndGlyphs">Complete-Discrepancy No Response from Applicant</text>
<text x="765.60" y="805.05" font-size="9.4" fill="#3f3fd9" textLength="14.70" lengthAdjust="spacingAndGlyphs">207</text>
<line x1="765.60" y1="806.65" x2="780.30" y2="806.65" stroke="#3f3fd9" stroke-width="0.8" />
<text x="400.30" y="823.00" font-size="9.4" fill="#4a4a4a" textLength="209.70" lengthAdjust="spacingAndGlyphs">Complete-Discrepancy No Response from Client</text>
<text x="765.60" y="823.00" font-size="9.4" fill="#3f3fd9" textLength="14.70" lengthAdjust="spacingAndGlyphs">106</text>
<line x1="765.60" y1="824.60" x2="780.30" y2="824.60" stroke="#3f3fd9" stroke-width="0.8" />
<text x="400.30" y="840.95" font-size="9.4" fill="#4a4a4a" textLength="250.00" lengthAdjust="spacingAndGlyphs">Complete-Discrepancy No Response From Verifying Party</text>
<text x="758.90" y="840.95" font-size="9.4" fill="#3f3fd9" textLength="21.40" lengthAdjust="spacingAndGlyphs">1,011</text>
<line x1="758.90" y1="842.55" x2="780.30" y2="842.55" stroke="#3f3fd9" stroke-width="0.8" />
<text x="400.30" y="858.90" font-size="9.4" fill="#4a4a4a" textLength="249.40" lengthAdjust="spacingAndGlyphs">Complete-Discrepancy Unable to Provide Documentation</text>
<text x="770.50" y="858.90" font-size="9.4" fill="#3f3fd9" textLength="9.80" lengthAdjust="spacingAndGlyphs">18</text>
<line x1="770.50" y1="860.50" x2="780.30" y2="860.50" stroke="#3f3fd9" stroke-width="0.8" />
<text x="400.30" y="876.85" font-size="9.4" fill="#4a4a4a" textLength="170.90" lengthAdjust="spacingAndGlyphs">Complete-Discrepancy Unable to Verify</text>
<text x="765.60" y="876.85" font-size="9.4" fill="#3f3fd9" textLength="14.70" lengthAdjust="spacingAndGlyphs">674</text>
<line x1="765.60" y1="878.45" x2="780.30" y2="878.45" stroke="#3f3fd9" stroke-width="0.8" />
<text x="400.30" y="894.80" font-size="9.4" fill="#4a4a4a" textLength="258.70" lengthAdjust="spacingAndGlyphs">Complete-Discrepancy Unable to Verify - Records Retention</text>
<text x="765.60" y="894.80" font-size="9.4" fill="#3f3fd9" textLength="14.70" lengthAdjust="spacingAndGlyphs">223</text>
<line x1="765.60" y1="896.40" x2="780.30" y2="896.40" stroke="#3f3fd9" stroke-width="0.8" />
<rect x="795.50" y="149.60" width="155.50" height="72.90" fill="#fff" stroke="#dcdcdc" stroke-width="1"/>
<line x1="796.00" y1="169.30" x2="950.50" y2="169.30" stroke="#e4e4e4" stroke-width="1" />
<line x1="796.00" y1="203.40" x2="950.50" y2="203.40" stroke="#e4e4e4" stroke-width="1" />
<rect x="801.50" y="157.50" width="6.80" height="5.20" fill="#c2c2c2" rx="0.5"/>
<path d="M802.6,157.5 L802.6,156.4 A2.3,2.3 0 0 1 807.2,156.4 L807.2,157.5" fill="none" stroke="#c2c2c2" stroke-width="1" />
<text x="813.60" y="164.20" font-size="9.5" fill="#555" textLength="75.70" lengthAdjust="spacingAndGlyphs">Product Category</text>
<rect x="804.70" y="178.20" width="59.00" height="17.30" fill="#80e6f1" />
<text x="811.00" y="191.20" font-size="9.4" fill="#fff" textLength="47.30" lengthAdjust="spacingAndGlyphs" stroke="#fff" stroke-width="0.35">Verification</text>
<rect x="795.50" y="230.40" width="155.50" height="208.60" fill="#fff" stroke="#dcdcdc" stroke-width="1"/>
<text x="804.60" y="245.10" font-size="9.5" fill="#555" textLength="85.30" lengthAdjust="spacingAndGlyphs">Top Parent Account</text>
<text x="804.60" y="256.40" font-size="9.5" fill="#555" textLength="25.30" lengthAdjust="spacingAndGlyphs">Name</text>
<rect x="804.70" y="269.90" width="55.20" height="17.10" fill="#02d8ea" />
<text x="810.70" y="282.75" font-size="9.4" fill="#fff" textLength="43.40" lengthAdjust="spacingAndGlyphs" stroke="#fff" stroke-width="0.35">Include all</text>
<line x1="796.00" y1="295.60" x2="950.50" y2="295.60" stroke="#e4e4e4" stroke-width="1" />
<path d="M825.4,296.1 L920.3,296.1 L873.2,305.4 Z" fill="#e8e8e8" />
<text x="804.60" y="319.40" font-size="9.5" fill="#555" textLength="94.90" lengthAdjust="spacingAndGlyphs">Parent Account Name</text>
<rect x="804.70" y="332.80" width="55.20" height="16.70" fill="#02d8ea" />
<text x="810.70" y="345.45" font-size="9.4" fill="#fff" textLength="43.40" lengthAdjust="spacingAndGlyphs" stroke="#fff" stroke-width="0.35">Include all</text>
<line x1="796.00" y1="358.60" x2="950.50" y2="358.60" stroke="#e4e4e4" stroke-width="1" />
<path d="M825.4,359.1 L920.3,359.1 L873.2,368.4 Z" fill="#e8e8e8" />
<text x="804.60" y="381.90" font-size="9.5" fill="#555" textLength="64.40" lengthAdjust="spacingAndGlyphs">Account Name</text>
<rect x="804.70" y="395.30" width="55.20" height="17.20" fill="#02d8ea" />
<text x="810.70" y="408.20" font-size="9.4" fill="#fff" textLength="43.40" lengthAdjust="spacingAndGlyphs" stroke="#fff" stroke-width="0.35">Include all</text>
<line x1="796.00" y1="421.10" x2="950.50" y2="421.10" stroke="#e4e4e4" stroke-width="1" />
<rect x="930.00" y="427.20" width="15.50" height="7.40" fill="#6fe3ee" rx="3.70" stroke="#a9a9a9" stroke-width="0.6"/>
<circle cx="941.80" cy="430.90" r="3.10" fill="#fff" stroke="#aaa" stroke-width="0.6"/>
<rect x="795.50" y="447.60" width="155.50" height="84.70" fill="#fff" stroke="#dcdcdc" stroke-width="1"/>
<path d="M803.8,455.70 L806,457.90 L803.8,460.10" fill="none" stroke="#555" stroke-width="0.9" />
<text x="813.70" y="461.70" font-size="9.5" fill="#555" textLength="96.70" lengthAdjust="spacingAndGlyphs">Months in Completion</text>
<text x="813.70" y="473.10" font-size="9.5" fill="#555" textLength="21.00" lengthAdjust="spacingAndGlyphs">Date</text>
<line x1="796.00" y1="478.50" x2="950.50" y2="478.50" stroke="#e4e4e4" stroke-width="1" />
<rect x="804.70" y="488.20" width="55.20" height="16.60" fill="#02d8ea" />
<text x="810.70" y="500.80" font-size="9.4" fill="#fff" textLength="43.40" lengthAdjust="spacingAndGlyphs" stroke="#fff" stroke-width="0.35">Include all</text>
<line x1="796.00" y1="513.40" x2="950.50" y2="513.40" stroke="#e4e4e4" stroke-width="1" />
<rect x="930.00" y="519.70" width="15.50" height="7.00" fill="#6fe3ee" rx="3.50" stroke="#a9a9a9" stroke-width="0.6"/>
<circle cx="942.00" cy="523.20" r="2.90" fill="#fff" stroke="#aaa" stroke-width="0.6"/>
<rect x="795.50" y="540.30" width="155.50" height="72.70" fill="#fff" stroke="#dcdcdc" stroke-width="1"/>
<path d="M803.8,548.00 L806,550.20 L803.8,552.40" fill="none" stroke="#555" stroke-width="0.9" />
<text x="813.70" y="554.00" font-size="9.5" fill="#555" textLength="79.00" lengthAdjust="spacingAndGlyphs">Verification Status</text>
<line x1="796.00" y1="559.80" x2="950.50" y2="559.80" stroke="#e4e4e4" stroke-width="1" />
<rect x="804.70" y="568.80" width="55.20" height="17.10" fill="#02d8ea" />
<text x="810.70" y="581.65" font-size="9.4" fill="#fff" textLength="43.40" lengthAdjust="spacingAndGlyphs" stroke="#fff" stroke-width="0.35">Include all</text>
<line x1="796.00" y1="594.50" x2="950.50" y2="594.50" stroke="#e4e4e4" stroke-width="1" />
<rect x="930.00" y="600.50" width="15.50" height="7.10" fill="#6fe3ee" rx="3.55" stroke="#a9a9a9" stroke-width="0.6"/>
<circle cx="941.95" cy="604.05" r="2.95" fill="#fff" stroke="#aaa" stroke-width="0.6"/>
<rect x="795.50" y="621.00" width="155.50" height="72.70" fill="#fff" stroke="#dcdcdc" stroke-width="1"/>
<path d="M803.8,628.70 L806,630.90 L803.8,633.10" fill="none" stroke="#555" stroke-width="0.9" />
<text x="813.60" y="635.00" font-size="9.5" fill="#555" textLength="95.30" lengthAdjust="spacingAndGlyphs">Product Sub-Category</text>
<line x1="796.00" y1="640.70" x2="950.50" y2="640.70" stroke="#e4e4e4" stroke-width="1" />
<rect x="804.70" y="649.60" width="55.20" height="17.20" fill="#02d8ea" />
<text x="810.70" y="662.50" font-size="9.4" fill="#fff" textLength="43.40" lengthAdjust="spacingAndGlyphs" stroke="#fff" stroke-width="0.35">Include all</text>
<line x1="796.00" y1="675.30" x2="950.50" y2="675.30" stroke="#e4e4e4" stroke-width="1" />
<rect x="930.00" y="681.40" width="15.50" height="7.00" fill="#6fe3ee" rx="3.50" stroke="#a9a9a9" stroke-width="0.6"/>
<circle cx="942.00" cy="684.90" r="2.90" fill="#fff" stroke="#aaa" stroke-width="0.6"/>
<rect x="795.50" y="701.50" width="155.50" height="84.80" fill="#fff" stroke="#dcdcdc" stroke-width="1"/>
<path d="M803.8,710.00 L806,712.20 L803.8,714.40" fill="none" stroke="#555" stroke-width="0.9" />
<text x="813.60" y="716.00" font-size="9.5" fill="#555" textLength="84.50" lengthAdjust="spacingAndGlyphs">Months in Creation</text>
<text x="813.60" y="727.60" font-size="9.5" fill="#555" textLength="21.00" lengthAdjust="spacingAndGlyphs">Date</text>
<line x1="796.00" y1="732.50" x2="950.50" y2="732.50" stroke="#e4e4e4" stroke-width="1" />
<rect x="804.70" y="742.00" width="55.20" height="17.00" fill="#02d8ea" />
<text x="810.70" y="754.80" font-size="9.4" fill="#fff" textLength="43.40" lengthAdjust="spacingAndGlyphs" stroke="#fff" stroke-width="0.35">Include all</text>
<line x1="796.00" y1="767.40" x2="950.50" y2="767.40" stroke="#e4e4e4" stroke-width="1" />
<rect x="930.00" y="773.80" width="15.50" height="6.70" fill="#6fe3ee" rx="3.35" stroke="#a9a9a9" stroke-width="0.6"/>
<circle cx="942.15" cy="777.15" r="2.75" fill="#fff" stroke="#aaa" stroke-width="0.6"/>
</svg></body></html>
